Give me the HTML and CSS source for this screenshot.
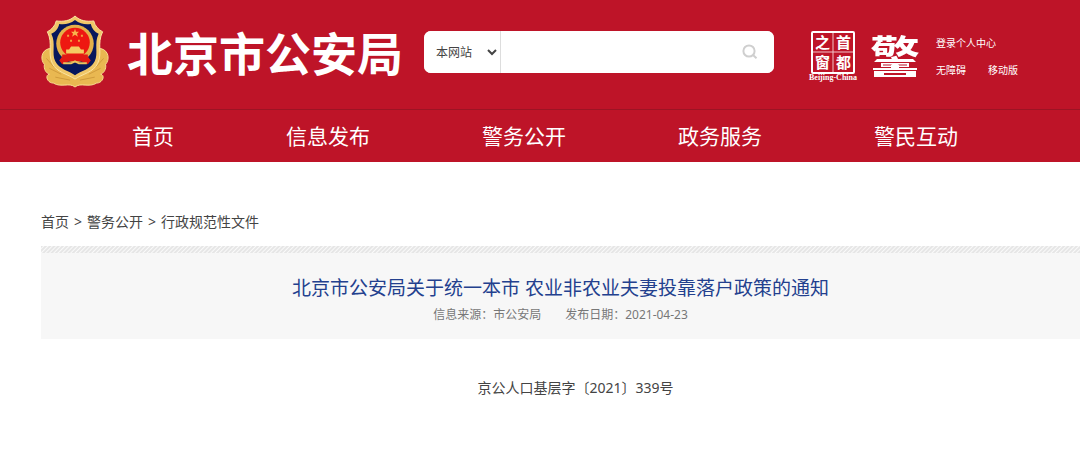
FILE: index.html
```html
<!DOCTYPE html>
<html lang="zh-CN">
<head>
  <meta charset="UTF-8">
  <title>北京市公安局</title>
  <link rel="stylesheet" href="styles.css">
</head>
<body>
  <header class="header">
    <div class="top">
      <a class="brand" href="#">
        <svg class="emblem" viewBox="0 0 68 74" aria-hidden="true">
          <!-- laurel -->
          <path d="M8 34 C-1 36 -1 46 3 50 C2 55 5 59 8 60 C3 61 6 69 12 69 C20 74 28 68 34 73 C40 68 48 74 56 69 C62 69 65 61 60 60 C63 59 66 55 65 50 C69 46 69 36 60 34 Z" fill="#e9b851" stroke="#f9dd91" stroke-width="1"/>
          <path d="M5 44 L13 53 M8 54 L20 60 M14 63 L29 66 M63 44 L55 53 M60 54 L48 60 M54 63 L39 66" stroke="#cf9a3c" stroke-width="1" fill="none"/>
          <!-- shield -->
          <path d="M34 1 C29 6 22 7 15 6 C14 11 10 15 6 17 C12 29 6 39 11 49 C15 58 27 60 34 65 C41 60 53 58 57 49 C62 39 56 29 62 17 C58 15 54 11 53 6 C46 7 39 6 34 1 Z" fill="#f0c768" stroke="#fbe6a5" stroke-width="1"/>
          <path d="M34 5 C29 9 23 10 18 9 C17 14 14 17 10 19 C15 29 10 39 14 47 C18 55 28 57 34 61 C40 57 50 55 54 47 C58 39 53 29 58 19 C54 17 51 14 50 9 C45 10 39 9 34 5 Z" fill="#07175c"/>
          <!-- national emblem -->
          <circle cx="34" cy="29" r="19" fill="#e3b14a"/>
          <circle cx="34" cy="28" r="15" fill="#ee1811"/>
          <path d="M34 14 l1 3 h3 l-2 2 1 3 -3 -2 -3 2 1 -3 -2 -2 h3 Z" fill="#f8b44d"/>
          <path d="M26 20 h2 v2 h-2 Z M40 20 h2 v2 h-2 Z M29 25 h2 v2 h-2 Z M37 25 h2 v2 h-2 Z" fill="#f2a03e"/>
          <path d="M28 35 L30 32 H38 L40 35 H43 V39 H25 V35 Z" fill="#f4cb62"/>
          <path d="M21 40 H47 V42 L50 46 L47 50 L40 47 H28 L21 50 L18 46 L21 42 Z" fill="#e11a14"/>
          <path d="M22 49 H30 L34 47 L38 49 H46" stroke="#edc35d" stroke-width="2" fill="none"/>
        </svg>
        <span class="site-name">北京市公安局</span>
      </a>
      <form class="search">
        <select class="scope" aria-label="搜索范围">
          <option>本网站</option>
        </select>
        <input class="keyword" type="text" aria-label="关键词">
        <button class="search-btn" type="button" aria-label="搜索">
          <svg viewBox="0 0 16 16" width="16" height="16" fill="none" stroke="#cfcfcf" stroke-width="2">
            <circle cx="7" cy="7" r="5.6"/>
            <path d="M11 11 L14.5 14.2"/>
          </svg>
        </button>
      </form>
      <div class="partners">
        <a href="#" aria-label="首都之窗">
          <svg class="capital" viewBox="0 0 48 52">
            <rect x="3" y="2" width="42" height="41" rx="1" fill="none" stroke="#fff" stroke-width="2"/>
            <path d="M24 3 V42 M4 22 H44" stroke="#f2c3c8" stroke-width="1"/>
            <g class="seal">
              <text x="6" y="18">之</text>
              <text x="27" y="18">首</text>
              <text x="6" y="38">窗</text>
              <text x="27" y="38">都</text>
            </g>
            <text class="seal-en" x="24" y="50" text-anchor="middle">Beijing-China</text>
          </svg>
        </a>
        <a href="#" aria-label="警">
          <svg class="police" viewBox="0 0 48 46">
            <text class="police-text" x="-1" y="45">警</text>
            <!-- gate tower -->
            <rect x="-1" y="26" width="50" height="24" fill="#be1428"/>
            <path d="M6 26 H42 L45 29 H3 Z M10 30 H38 V34 H10 Z M2 35 H46 V37 H2 Z M3 38 H45 V44 H3 Z" fill="#fff"/>
            <path d="M12 32 H36" stroke="#be1428" stroke-width="1"/>
            <path d="M20 35 V32 Q24 28 28 32 V35 Z" fill="#fff"/>
            <path d="M13 40 H35 V42 H13 Z" fill="#be1428"/>
          </svg>
        </a>
      </div>
      <div class="user-links">
        <a href="#">登录个人中心</a>
        <div class="link-row">
          <a href="#">无障碍</a>
          <a href="#">移动版</a>
        </div>
      </div>
    </div>
    <nav class="nav">
      <a href="#">首页</a>
      <a href="#">信息发布</a>
      <a href="#">警务公开</a>
      <a href="#">政务服务</a>
      <a href="#">警民互动</a>
    </nav>
  </header>

  <main class="main">
    <div class="crumbs">
      <a href="#">首页</a>
      <span>&gt;</span>
      <a href="#">警务公开</a>
      <span>&gt;</span>
      <a href="#">行政规范性文件</a>
    </div>
    <div class="title-box">
      <h1>北京市公安局关于统一本市 农业非农业夫妻投靠落户政策的通知</h1>
      <div class="meta">
        <span>信息来源：市公安局</span>
        <span>发布日期：2021-04-23</span>
      </div>
    </div>
    <p class="doc-no">京公人口基层字〔2021〕339号</p>
  </main>
</body>
</html>
```

FILE: styles.css
```css
* {
  box-sizing: border-box;
}
body {
  margin: 0;
  background: #fff;
  color: #444;
  font-family: "Noto Sans", "Noto Sans CJK SC", sans-serif;
  font-size: 14px;
  overflow-x: hidden;
}
a {
  color: inherit;
  text-decoration: none;
}
.header {
  background: #be1428;
  color: #fff;
}
.top {
  display: flex;
  align-items: flex-start;
  padding: 15px 40px 21px;
}
.brand {
  display: flex;
  align-items: center;
  margin-right: 21px;
}
.emblem {
  width: 70px;
  height: 73px;
}
.site-name {
  margin-left: 17px;
  font-family: "Noto Sans CJK SC", sans-serif;
  font-size: 46px;
  font-weight: 700;
  line-height: 73px;
  white-space: nowrap;
}
.search {
  display: flex;
  width: 350px;
  height: 42px;
  margin: 16px 35px 0 0;
  background: #fff;
  border-radius: 7px;
  overflow: hidden;
}
.scope {
  width: 77px;
  padding: 0 0 0 8px;
  border: 0;
  border-right: 1px solid #ddd;
  background: #fff;
  color: #444;
  font-family: inherit;
  font-size: 12px;
}
.keyword {
  flex: 1;
  min-width: 0;
  border: 0;
  outline: none;
}
.search-btn {
  display: flex;
  align-items: center;
  padding: 0 16px;
  border: 0;
  background: #fff;
}
.partners {
  display: flex;
  gap: 14px;
  margin: 15px 17px 0 0;
}
.partners svg {
  display: block;
  overflow: visible;
}
.capital {
  width: 48px;
  height: 52px;
}
.seal {
  fill: #fff;
  font-family: "Noto Sans CJK SC", sans-serif;
  font-size: 15px;
  font-weight: 700;
}
.seal-en {
  fill: #fff;
  font-family: "Liberation Serif", serif;
  font-size: 8px;
  font-weight: 700;
}
.police {
  width: 48px;
  height: 46px;
  margin-top: 3px;
}
.police-text {
  fill: #fff;
  font-family: "Noto Sans CJK SC", sans-serif;
  font-size: 50px;
  font-weight: 700;
}
.user-links {
  margin-top: 18px;
  font-size: 10px;
  line-height: 20px;
  white-space: nowrap;
}
.link-row {
  display: flex;
  gap: 22px;
  margin-top: 7px;
}
.nav {
  display: flex;
  padding-left: 76px;
  border-top: 1px solid #9c1424;
}
.nav a {
  padding: 0 56px;
  font-size: 21px;
  line-height: 52px;
  white-space: nowrap;
}
.main {
  padding: 50px 0 50px 41px;
}
.crumbs {
  display: flex;
  gap: 5px;
  line-height: 20px;
}
.title-box {
  position: relative;
  margin-top: 14px;
  padding: 26px 0 13px;
  background: #f7f7f7;
  text-align: center;
}
.title-box::before {
  content: "";
  position: absolute;
  top: 0;
  left: 0;
  right: 0;
  height: 7px;
  background: repeating-linear-gradient(135deg, #e6e6e6 0, #e6e6e6 1px, #fafafa 2px, #e6e6e6 3px);
}
.title-box h1 {
  margin: 0;
  color: #23408e;
  font-size: 19px;
  font-weight: 400;
  line-height: 32px;
}
.meta {
  display: flex;
  justify-content: center;
  gap: 24px;
  color: #777;
  font-size: 12px;
  line-height: 22px;
}
.doc-no {
  margin: 39px 0 0;
  padding-left: 30px;
  line-height: 20px;
  text-align: center;
}
```
